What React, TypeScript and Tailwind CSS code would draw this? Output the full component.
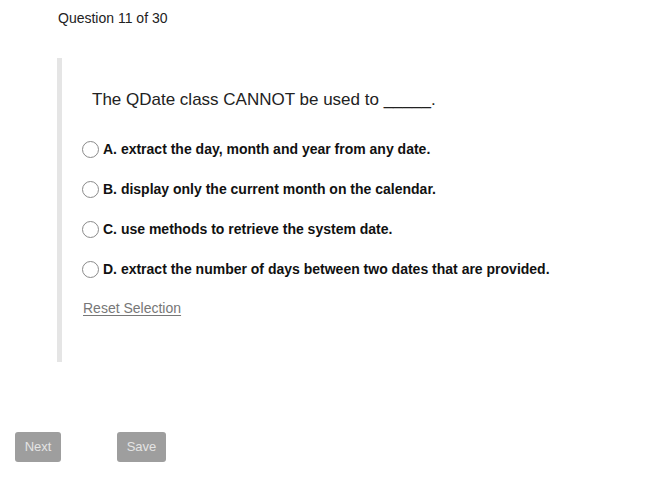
import React, { useState } from "react";

const options = [
  "A. extract the day, month and year from any date.",
  "B. display only the current month on the calendar.",
  "C. use methods to retrieve the system date.",
  "D. extract the number of days between two dates that are provided.",
];

export default function App() {
  const [picked, setPicked] = useState<number | null>(null);

  return (
    <div className="w-[649px] h-[490px] bg-white font-['Liberation_Sans',Arial,sans-serif] text-[#222] relative">
      <div className="pl-[58px] pt-[10px] text-[14px] leading-[16px]">Question 11 of 30</div>

      {/* question block */}
      <div className="ml-[57px] mt-[32px] h-[304px] border-l-[5px] border-[#e5e5e5] pl-[20px] pt-[32px]">
        <p className="pl-[10px] text-[17px] leading-[20px] text-[#222]">
          The QDate class CANNOT be used to _____.
        </p>
        <div className="mt-[30px] flex flex-col gap-[22px]">
          {options.map((o, i) => (
            <label key={i} className="flex items-center gap-[4px] h-[18px] cursor-pointer">
              <input
                type="radio"
                name="q"
                checked={picked === i}
                onChange={() => setPicked(i)}
                className="appearance-none w-[17px] h-[17px] rounded-full border border-[#8a8a8a] bg-white m-0 checked:border-[5px] checked:border-[#0075ff]"
              />
              <span className="text-[14px] font-bold text-[#111]">{o}</span>
            </label>
          ))}
        </div>
        <button
          onClick={() => setPicked(null)}
          className="mt-[20px] ml-[1px] text-[14px] text-[#777] underline underline-offset-2"
        >
          Reset Selection
        </button>
      </div>

      <div className="flex gap-[56px] pl-[15px] mt-[70px]">
        <button className="w-[46px] h-[30px] rounded-[3px] bg-[#9e9e9e] text-[#e4e4e4] text-[13px]">Next</button>
        <button className="w-[49px] h-[30px] rounded-[3px] bg-[#9e9e9e] text-[#e4e4e4] text-[13px]">Save</button>
      </div>
    </div>
  );
}
